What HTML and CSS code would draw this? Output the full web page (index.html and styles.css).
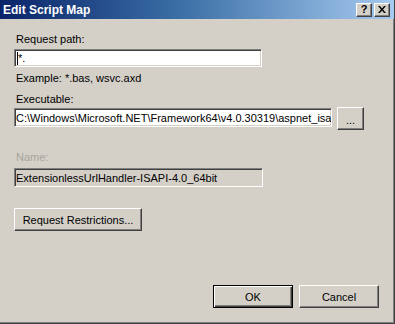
FILE: index.html
```html
<!DOCTYPE html>
<html>
<head>
<meta charset="utf-8">
<link rel="stylesheet" href="styles.css">
</head>
<body>
<div class="window">
  <div class="titlebar">
    <span class="title">Edit Script Map</span>
    <div class="tbtns">
      <span class="tbtn">?</span>
      <span class="tbtn tclose">
        <svg width="8" height="7" viewBox="0 0 8 7"><path d="M0 0h2l2 2.5L6 0h2L5 3.5 8 7H6L4 4.5 2 7H0l3-3.5z" fill="#000"/></svg>
      </span>
    </div>
  </div>
  <div class="content">
    <div class="label l1">Request path:</div>
    <div class="input in1"><span class="caret"></span>*.</div>
    <div class="label l2">Example: *.bas, wsvc.axd</div>
    <div class="label l3">Executable:</div>
    <div class="exrow">
      <div class="input in2">C:\Windows\Microsoft.NET\Framework64\v4.0.30319\aspnet_isa</div>
      <div class="btn browse">...</div>
    </div>
    <div class="label l4 disabled">Name:</div>
    <div class="input in3">ExtensionlessUrlHandler-ISAPI-4.0_64bit</div>
    <div class="btn restr">Request Restrictions...</div>
    <div class="footer">
      <div class="btn okbtn">OK</div>
      <div class="btn cancel">Cancel</div>
    </div>
  </div>
</div>
</body>
</html>
```

FILE: styles.css
```css
html, body {
  margin: 0;
  padding: 0;
  background: #d4d0c8;
}
.window {
  width: 395px;
  height: 324px;
  display: flex;
  flex-direction: column;
  background: #d4d0c8;
  font-family: "Liberation Sans", Arial, sans-serif;
  font-size: 11px;
  color: #000;
  box-sizing: border-box;
  border-right: 1px solid #404040;
  border-bottom: 1px solid #404040;
  box-shadow: inset -1px -1px #808080, inset -3px -3px #d4d0c8;
}
.titlebar {
  height: 19px;
  flex: none;
  display: flex;
  align-items: center;
  justify-content: space-between;
  background: linear-gradient(to right, #0a246a 0%, #3a6ea5 45%, #a6caf0 100%);
  padding: 0 4px 0 3px;
}
.title {
  color: #fff;
  font-weight: bold;
  font-size: 12px;
}
.tbtns {
  display: flex;
  gap: 2px;
}
.tbtn {
  width: 16px;
  height: 14px;
  box-sizing: border-box;
  background: #d4d0c8;
  border: 1px solid;
  border-color: #fff #404040 #404040 #fff;
  box-shadow: inset -1px -1px #808080;
  display: flex;
  align-items: center;
  justify-content: center;
  font-weight: bold;
  font-size: 11px;
  line-height: 1;
}
.content {
  flex: 1;
  display: flex;
  flex-direction: column;
  align-items: flex-start;
  padding: 0 0 0 14px;
}
.label {
  line-height: 14px;
  height: 14px;
  margin-left: 2px;
}
.l1 { margin-top: 13px; }
.l2 { margin-top: 4px; }
.l3 { margin-top: 7px; }
.l4 { margin-top: 20px; }
.disabled { color: #a7a49c; }
.input {
  box-sizing: border-box;
  background: #fff;
  border: 1px solid;
  border-color: #808080 #fff #fff #808080;
  box-shadow: inset 1px 1px #404040, inset -1px -1px #d4d0c8;
  padding: 0 0 0 2px;
  display: flex;
  align-items: center;
  white-space: nowrap;
  overflow: hidden;
}
.in1 {
  margin-top: 3px;
  width: 248px;
  height: 18px;
}
.caret {
  display: inline-block;
  width: 1px;
  height: 13px;
  background: #000;
}
.exrow {
  margin-top: 1px;
  display: flex;
  align-items: flex-start;
  gap: 5px;
}
.in2 {
  margin-top: 1px;
  width: 318px;
  height: 19px;
  padding-left: 1px;
}
.in3 {
  margin-top: 4px;
  width: 249px;
  height: 19px;
  background: #d4d0c8;
  padding-left: 1px;
}
.btn {
  box-sizing: border-box;
  background: #d4d0c8;
  border: 1px solid;
  border-color: #fff #404040 #404040 #fff;
  box-shadow: inset -1px -1px #808080;
  display: flex;
  align-items: center;
  justify-content: center;
  white-space: nowrap;
}
.browse {
  width: 27px;
  height: 23px;
  padding-top: 3px;
}
.restr {
  margin-top: 21px;
  width: 128px;
  height: 23px;
}
.footer {
  margin-top: 54px;
  align-self: stretch;
  display: flex;
  justify-content: flex-end;
  gap: 6px;
  padding-right: 15px;
}
.okbtn, .cancel {
  width: 80px;
  height: 23px;
}
.okbtn {
  border: 1px solid #000;
  box-shadow: inset 1px 1px #fff, inset -1px -1px #404040, inset -2px -2px #808080;
}
```
